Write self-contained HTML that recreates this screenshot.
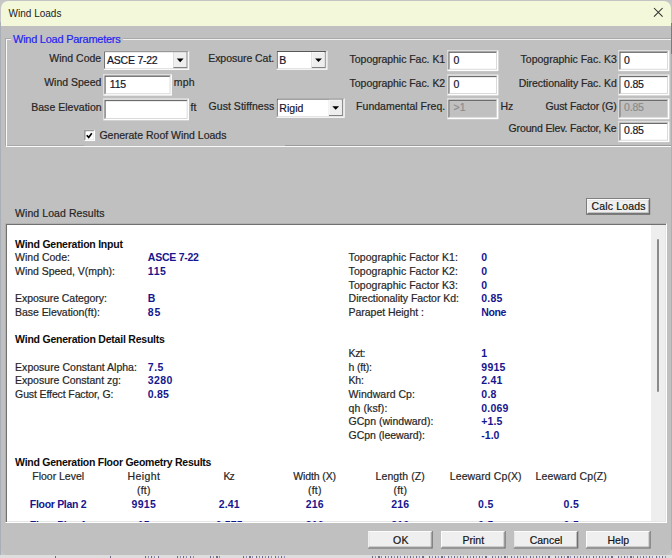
<!DOCTYPE html>
<html><head><meta charset="utf-8"><title>Wind Loads</title>
<style>
*{box-sizing:border-box;margin:0;padding:0}
html,body{width:672px;height:558px;overflow:hidden;background:#c6c6c6}
body{font-family:"Liberation Sans",sans-serif;font-size:10.5px;color:#222;position:relative;-webkit-text-stroke:0.2px}
div,span{position:absolute;white-space:nowrap}
#edgeL{left:0;top:22px;width:1px;height:536px;background:#a9afb6}
#bot{left:0;top:555px;width:672px;height:3px;background:#dedede}
#bot i{position:absolute;top:1.2px;height:1.8px;background:repeating-linear-gradient(90deg,#6a6a88 0 1.2px,#dcdce2 1.2px 3.1px,#8c8cac 3.1px 4px,#e4e4e4 4px 6.3px)}
#edgeT{left:0;top:0;width:672px;height:1px;background:#c4c4c4}
#dlg{left:1px;top:1px;width:670px;height:554.4px;background:#c0c0c0;border-radius:7px;overflow:hidden}
#title{left:0;top:0;width:670px;height:25.3px;background:#f2f8d9}
#ttext{left:8.6px;font-size:10px;letter-spacing:0;color:#1c1c1c;line-height:12px;-webkit-text-stroke:0}
.l{line-height:13px;height:13px;color:#262626}
.inp{background:#fff;border-top:1px solid #969696;border-left:1px solid #969696;border-right:1px solid #fff;border-bottom:1px solid #fff;box-shadow:inset 1px 1px 0 #767676, inset -1px -1px 0 #dcdcdc;overflow:hidden;color:#14142a}
.inp.dis{background:#c0c0c0;color:#8c8c8c}
.inp span{line-height:13px}
.ddb{right:1px;top:1px;bottom:1px;width:14px;background:#e8e8e8;border-top:1px solid #f6f6f6;border-left:1px solid #f6f6f6;border-right:1px solid #848484;border-bottom:1px solid #848484;box-shadow:inset -1px -1px 0 #b4b4b4}
.ddb:after{content:"";position:absolute;left:3px;top:4.5px;border-left:3.5px solid transparent;border-right:3.5px solid transparent;border-top:4px solid #000}
.btn{background:#e9e9e9;border-top:1px solid #fbfbfb;border-left:1px solid #fbfbfb;border-right:1px solid #6c6c6c;border-bottom:1px solid #6c6c6c;box-shadow:inset -1px -1px 0 #a4a4a4;text-align:center;color:#141414}
.btn span{left:0;right:0;text-align:center;line-height:13px}
#panel{left:5px;top:223px;width:662px;height:300px;background:#fff;border-top:1px solid #b2b2b2;border-left:1px solid #b2b2b2;border-right:1px solid #fff;border-bottom:1px solid #fff;box-shadow:inset 1px 1px 0 #707070, inset -1px -1px 0 #e6e6e6;overflow:hidden}
.t{line-height:13px;color:#262626}
.b{font-weight:bold;color:#0c0c0c;-webkit-text-stroke:0}
.v{font-weight:bold;color:#16168e;-webkit-text-stroke:0}
</style></head><body>
<div id="edgeT"></div><div id="edgeL"></div><div id="bot"><i style="left:55px;width:2px"></i><i style="left:110px;width:2px"></i><i style="left:145px;width:16px"></i><i style="left:177px;width:17px"></i><i style="left:210px;width:10px"></i><i style="left:243px;width:42px"></i><i style="left:372px;width:294px"></i></div>
<div id="dlg"><div id="title"></div></div>
<svg style="position:absolute;left:0;top:0" width="672" height="558" viewBox="0 0 672 558"><rect x="103.6" y="50.8" width="85.6" height="19.1" fill="#ffffff"/><path d="M103.6 50.8H189.2L188.6 51.4H104.2V69.3L103.6 69.9Z" fill="#a4a4a4"/><rect x="104.2" y="51.4" width="84.0" height="17.5" fill="#dcdcdc"/><path d="M104.19999999999999 51.4H188.2L187.3 52.3H105.1V68.0L104.19999999999999 68.9Z" fill="#585858"/><rect x="105.1" y="52.3" width="82.3" height="15.8" fill="#fff"/><rect x="173.4" y="52.3" width="14.0" height="15.8" fill="#828282"/><rect x="173.4" y="52.3" width="12.9" height="14.7" fill="#f8f8f8"/><rect x="174.3" y="53.2" width="12.0" height="13.8" fill="#eeeeee"/><path d="M176.8 58.6H183.6L180.2 62.2Z" fill="#000"/><rect x="276.3" y="50.5" width="51.2" height="19.3" fill="#ffffff"/><path d="M276.3 50.5H327.5L326.9 51.1H276.9V69.2L276.3 69.8Z" fill="#a4a4a4"/><rect x="276.9" y="51.1" width="49.6" height="17.7" fill="#dcdcdc"/><path d="M276.90000000000003 51.1H326.5L325.6 52.0H277.8V67.9L276.90000000000003 68.8Z" fill="#585858"/><rect x="277.8" y="52.0" width="47.9" height="16.0" fill="#fff"/><rect x="311.7" y="52.0" width="14.0" height="16.0" fill="#828282"/><rect x="311.7" y="52.0" width="12.9" height="14.9" fill="#f8f8f8"/><rect x="312.6" y="52.9" width="12.0" height="14.0" fill="#eeeeee"/><path d="M315.1 58.4H321.9L318.5 62.0Z" fill="#000"/><rect x="447" y="50.2" width="51.4" height="20.9" fill="#ffffff"/><path d="M447 50.2H498.4L497.0 51.6H448.4V69.7L447 71.1Z" fill="#dadada"/><rect x="448.4" y="51.6" width="48.6" height="18.1" fill="#d6d6d6"/><path d="M448.4 51.6H497.0L495.7 52.9H449.7V68.4L448.4 69.69999999999999Z" fill="#6c6c6c"/><rect x="449.7" y="52.9" width="46.4" height="15.9" fill="#fff"/><rect x="618" y="50.2" width="51.4" height="20.9" fill="#ffffff"/><path d="M618 50.2H669.4L668.0 51.6H619.4V69.7L618 71.1Z" fill="#dadada"/><rect x="619.4" y="51.6" width="48.6" height="18.1" fill="#d6d6d6"/><path d="M619.4 51.6H668.0L666.7 52.9H620.7V68.4L619.4 69.69999999999999Z" fill="#6c6c6c"/><rect x="620.7" y="52.9" width="46.4" height="15.9" fill="#fff"/><rect x="103.1" y="74.2" width="68.8" height="21.4" fill="#ffffff"/><path d="M103.1 74.2H171.9L170.5 75.6H104.5V94.2L103.1 95.6Z" fill="#dadada"/><rect x="104.5" y="75.6" width="66.0" height="18.6" fill="#d6d6d6"/><path d="M104.5 75.60000000000001H170.5L169.2 76.9H105.8V92.9L104.5 94.19999999999999Z" fill="#6c6c6c"/><rect x="105.8" y="76.9" width="63.8" height="16.4" fill="#fff"/><rect x="447" y="74.6" width="51.4" height="20.8" fill="#ffffff"/><path d="M447 74.6H498.4L497.0 76.0H448.4V94.0L447 95.4Z" fill="#dadada"/><rect x="448.4" y="76.0" width="48.6" height="18.0" fill="#d6d6d6"/><path d="M448.4 76.0H497.0L495.7 77.3H449.7V92.7L448.4 94.0Z" fill="#6c6c6c"/><rect x="449.7" y="77.3" width="46.4" height="15.8" fill="#fff"/><rect x="618" y="74.6" width="51.4" height="20.8" fill="#ffffff"/><path d="M618 74.6H669.4L668.0 76.0H619.4V94.0L618 95.4Z" fill="#dadada"/><rect x="619.4" y="76.0" width="48.6" height="18.0" fill="#d6d6d6"/><path d="M619.4 76.0H668.0L666.7 77.3H620.7V92.7L619.4 94.0Z" fill="#6c6c6c"/><rect x="620.7" y="77.3" width="46.4" height="15.8" fill="#fff"/><rect x="103.1" y="98.6" width="85.9" height="21.7" fill="#ffffff"/><path d="M103.1 98.6H189L187.6 100.0H104.5V118.9L103.1 120.3Z" fill="#dadada"/><rect x="104.5" y="100.0" width="83.1" height="18.9" fill="#d6d6d6"/><path d="M104.5 100.0H187.6L186.3 101.3H105.8V117.6L104.5 118.89999999999999Z" fill="#6c6c6c"/><rect x="105.8" y="101.3" width="80.9" height="16.7" fill="#fff"/><rect x="276.3" y="98.2" width="68.4" height="19.6" fill="#ffffff"/><path d="M276.3 98.2H344.7L344.1 98.8H276.9V117.2L276.3 117.8Z" fill="#a4a4a4"/><rect x="276.9" y="98.8" width="66.8" height="18.0" fill="#dcdcdc"/><path d="M276.90000000000003 98.8H343.7L342.8 99.7H277.8V115.9L276.90000000000003 116.8Z" fill="#585858"/><rect x="277.8" y="99.7" width="65.1" height="16.3" fill="#fff"/><rect x="328.9" y="99.7" width="14.0" height="16.3" fill="#828282"/><rect x="328.9" y="99.7" width="12.9" height="15.2" fill="#f8f8f8"/><rect x="329.8" y="100.6" width="12.0" height="14.3" fill="#eeeeee"/><path d="M332.3 106.25H339.1L335.7 109.85Z" fill="#000"/><rect x="447" y="98.4" width="51.4" height="20.8" fill="#ffffff"/><path d="M447 98.4H498.4L497.0 99.8H448.4V117.8L447 119.2Z" fill="#dadada"/><rect x="448.4" y="99.8" width="48.6" height="18.0" fill="#d6d6d6"/><path d="M448.4 99.80000000000001H497.0L495.7 101.1H449.7V116.5L448.4 117.8Z" fill="#6c6c6c"/><rect x="449.7" y="101.1" width="46.4" height="15.8" fill="#c0c0c0"/><rect x="618" y="98.4" width="51.4" height="20.8" fill="#ffffff"/><path d="M618 98.4H669.4L668.0 99.8H619.4V117.8L618 119.2Z" fill="#dadada"/><rect x="619.4" y="99.8" width="48.6" height="18.0" fill="#d6d6d6"/><path d="M619.4 99.80000000000001H668.0L666.7 101.1H620.7V116.5L619.4 117.8Z" fill="#6c6c6c"/><rect x="620.7" y="101.1" width="46.4" height="15.8" fill="#c0c0c0"/><rect x="83.9" y="129.7" width="11.15" height="11.35" fill="#ffffff"/><path d="M83.9 129.7H95.05L93.15 131.6H85.8V139.15L83.9 141.05Z" fill="#9a9a9a"/><rect x="85.8" y="131.6" width="8.3" height="8.5" fill="#e4e4e4"/><rect x="85.8" y="131.6" width="7.6" height="7.8" fill="#ffffff"/><path d="M86.7 135.2 L88.7 137.4 L91.8 133.3" stroke="#000" stroke-width="1.7" fill="none"/><rect x="618" y="121.3" width="51.4" height="20.8" fill="#ffffff"/><path d="M618 121.3H669.4L668.0 122.7H619.4V140.7L618 142.1Z" fill="#dadada"/><rect x="619.4" y="122.7" width="48.6" height="18.0" fill="#d6d6d6"/><path d="M619.4 122.7H668.0L666.7 124.0H620.7V139.4L619.4 140.7Z" fill="#6c6c6c"/><rect x="620.7" y="124.0" width="46.4" height="15.8" fill="#fff"/><rect x="586" y="198.2" width="64.2" height="16.5" fill="#707070"/><rect x="586.9" y="199.1" width="63.0" height="15.3" fill="#6a6a6a"/><path d="M586.9 199.1H649.4L648.6 200.1V213.1H587.9L586.9 213.9Z" fill="#fcfcfc"/><rect x="587.9" y="200.1" width="60.8" height="13.1" fill="#a8a8a8"/><rect x="587.9" y="200.1" width="60.0" height="12.3" fill="#efefef"/><rect x="368.1" y="531" width="64.6" height="17.5" fill="#6a6a6a"/><path d="M368.1 531H432.2L431.4 532V547.2H369.1L368.1 548.0Z" fill="#fcfcfc"/><rect x="369.1" y="532" width="62.4" height="15.3" fill="#a8a8a8"/><rect x="369.1" y="532" width="61.6" height="14.5" fill="#efefef"/><rect x="441" y="531" width="64.6" height="17.5" fill="#6a6a6a"/><path d="M441 531H505.1L504.3 532V547.2H442L441 548.0Z" fill="#fcfcfc"/><rect x="442" y="532" width="62.4" height="15.3" fill="#a8a8a8"/><rect x="442" y="532" width="61.6" height="14.5" fill="#efefef"/><rect x="513.7" y="531" width="64.6" height="17.5" fill="#6a6a6a"/><path d="M513.7 531H577.8L577.0 532V547.2H514.7L513.7 548.0Z" fill="#fcfcfc"/><rect x="514.7" y="532" width="62.4" height="15.3" fill="#a8a8a8"/><rect x="514.7" y="532" width="61.6" height="14.5" fill="#efefef"/><rect x="586" y="531" width="64.6" height="17.5" fill="#6a6a6a"/><path d="M586 531H650.1L649.3 532V547.2H587L586 548.0Z" fill="#fcfcfc"/><rect x="587" y="532" width="62.4" height="15.3" fill="#a8a8a8"/><rect x="587" y="532" width="61.6" height="14.5" fill="#efefef"/></svg>
<span id="ttext" style="top:7.73px">Wind Loads</span>
<svg style="position:absolute;left:653px;top:6.6px" width="11" height="11" viewBox="0 0 11 11"><path d="M1 1 L9.6 9.6 M9.6 1 L1 9.6" stroke="#2c2c2c" stroke-width="1.05" fill="none"/></svg>
<div style="left:5px;top:38px;width:667px;height:108px;border:1px solid #a9a9a9;border-right:none"></div>
<div style="left:6px;top:39px;width:666px;height:108px;border:1px solid #fafafa;border-top-color:#f0f0f0;border-right:none"></div>
<div style="left:84px;top:145px;width:201px;height:1px;background:#bcbcbc"></div>
<div style="left:285px;top:145px;width:387px;height:1px;background:#9c9c9c"></div>
<div style="left:11px;top:36px;width:112px;height:6px;background:#c0c0c0"></div>
<span class="l" style="left:13px;top:32.89px;color:#2424f2;font-size:11px;letter-spacing:-0.25px">Wind Load Parameters</span>
<span class="l" style="top:52.06px;letter-spacing:-0.007px;left:49.3px;">Wind Code</span>
<span class="l" style="top:53.89px;letter-spacing:-0.241px;left:107.1px;color:#14142a;">ASCE 7-22</span>
<span class="l" style="top:52.06px;letter-spacing:-0.046px;left:208.2px;">Exposure Cat.</span>
<span class="l" style="top:53.89px;left:279.3px;color:#14142a;">B</span>
<span class="l" style="top:53.06px;letter-spacing:-0.04px;left:349.6px;">Topographic Fac. K1</span>
<span class="l" style="top:53.89px;left:453.6px;color:#14142a;">0</span>
<span class="l" style="top:53.06px;letter-spacing:-0.006px;left:520.6px;">Topographic Fac. K3</span>
<span class="l" style="top:53.89px;left:624.1px;color:#14142a;">0</span>
<span class="l" style="top:76.06px;letter-spacing:-0.0px;left:44.2px;">Wind Speed</span>
<span class="l" style="top:77.89px;letter-spacing:-0.173px;left:109.8px;color:#14142a;">115</span>
<span class="l" style="top:76.06px;letter-spacing:0.231px;left:173.7px;">mph</span>
<span class="l" style="top:77.06px;letter-spacing:-0.04px;left:349.6px;">Topographic Fac. K2</span>
<span class="l" style="top:77.89px;left:453.6px;color:#14142a;">0</span>
<span class="l" style="top:77.06px;letter-spacing:-0.057px;left:518.8px;">Directionality Fac. Kd</span>
<span class="l" style="top:77.89px;letter-spacing:-0.207px;left:624.1px;color:#14142a;">0.85</span>
<span class="l" style="top:101.06px;letter-spacing:0.035px;left:31.2px;">Base Elevation</span>
<span class="l" style="top:101.06px;left:190.6px;">ft</span>
<span class="l" style="top:100.06px;letter-spacing:0.033px;left:208.6px;">Gust Stiffness</span>
<span class="l" style="top:101.89px;letter-spacing:0.055px;left:279.3px;color:#14142a;">Rigid</span>
<span class="l" style="top:100.06px;letter-spacing:0.024px;left:356.1px;">Fundamental Freq.</span>
<span class="l" style="top:100.89px;left:453.6px;color:#8c8c8c;">&gt;1</span>
<span class="l" style="top:100.06px;left:500.4px;">Hz</span>
<span class="l" style="top:100.06px;letter-spacing:-0.11px;left:545.4px;">Gust Factor (G)</span>
<span class="l" style="top:100.89px;letter-spacing:-0.207px;left:624.1px;color:#8c8c8c;">0.85</span>
<span class="l" style="top:129.06px;letter-spacing:-0.011px;left:99.4px;">Generate Roof Wind Loads</span>
<span class="l" style="top:122.06px;letter-spacing:-0.149px;left:508.6px;">Ground Elev. Factor, Ke</span>
<span class="l" style="top:123.89px;letter-spacing:-0.207px;left:624.1px;color:#14142a;">0.85</span>
<span class="l" style="top:207.06px;letter-spacing:0.079px;left:15.0px;">Wind Load Results</span>
<span class="l" style="top:200.06px;letter-spacing:0.185px;left:591.4px;color:#141414;">Calc Loads</span>
<div id="panel">
<span class="t b" style="top:14.06px;letter-spacing:-0.234px;left:9.1px;">Wind Generation Input</span>
<span class="t" style="top:27.06px;letter-spacing:-0.007px;left:9.1px;">Wind Code:</span>
<span class="t v" style="top:27.06px;letter-spacing:-0.251px;left:141.8px;">ASCE 7-22</span>
<span class="t" style="top:41.06px;letter-spacing:-0.033px;left:9.1px;">Wind Speed, V(mph):</span>
<span class="t v" style="top:41.06px;letter-spacing:0.573px;left:141.8px;">115</span>
<span class="t" style="top:68.06px;letter-spacing:-0.06px;left:9.1px;">Exposure Category:</span>
<span class="t v" style="top:68.06px;letter-spacing:0.006px;left:141.8px;">B</span>
<span class="t" style="top:82.06px;letter-spacing:-0.055px;left:9.1px;">Base Elevation(ft):</span>
<span class="t v" style="top:82.06px;letter-spacing:0.913px;left:141.8px;">85</span>
<span class="t" style="top:137.06px;letter-spacing:0.016px;left:9.1px;">Exposure Constant Alpha:</span>
<span class="t v" style="top:137.06px;letter-spacing:0.495px;left:141.8px;">7.5</span>
<span class="t" style="top:150.06px;letter-spacing:-0.022px;left:9.1px;">Exposure Constant zg:</span>
<span class="t v" style="top:150.06px;letter-spacing:0.414px;left:141.8px;">3280</span>
<span class="t" style="top:164.06px;letter-spacing:-0.117px;left:9.1px;">Gust Effect Factor, G:</span>
<span class="t v" style="top:164.06px;letter-spacing:0.221px;left:141.8px;">0.85</span>
<span class="t b" style="top:109.06px;letter-spacing:-0.223px;left:9.1px;">Wind Generation Detail Results</span>
<span class="t" style="top:27.06px;letter-spacing:0.035px;left:342.6px;">Topographic Factor K1:</span>
<span class="t v" style="top:27.06px;letter-spacing:0.756px;left:475.3px;">0</span>
<span class="t" style="top:41.06px;letter-spacing:0.035px;left:342.6px;">Topographic Factor K2:</span>
<span class="t v" style="top:41.06px;letter-spacing:0.756px;left:475.3px;">0</span>
<span class="t" style="top:55.06px;letter-spacing:0.035px;left:342.6px;">Topographic Factor K3:</span>
<span class="t v" style="top:55.06px;letter-spacing:0.756px;left:475.3px;">0</span>
<span class="t" style="top:68.06px;letter-spacing:-0.049px;left:342.6px;">Directionality Factor Kd:</span>
<span class="t v" style="top:68.06px;letter-spacing:0.221px;left:475.3px;">0.85</span>
<span class="t" style="top:82.06px;letter-spacing:-0.039px;left:342.6px;">Parapet Height :</span>
<span class="t v" style="top:82.06px;letter-spacing:-0.383px;left:475.3px;">None</span>
<span class="t" style="top:123.06px;letter-spacing:-0.431px;left:342.6px;">Kzt:</span>
<span class="t v" style="top:123.06px;letter-spacing:-0.244px;left:475.3px;">1</span>
<span class="t" style="top:137.06px;letter-spacing:-0.203px;left:342.6px;">h (ft):</span>
<span class="t v" style="top:137.06px;letter-spacing:0.247px;left:475.3px;">9915</span>
<span class="t" style="top:150.06px;letter-spacing:-0.233px;left:342.6px;">Kh:</span>
<span class="t v" style="top:150.06px;letter-spacing:0.221px;left:475.3px;">2.41</span>
<span class="t" style="top:164.06px;letter-spacing:0.032px;left:342.6px;">Windward Cp:</span>
<span class="t v" style="top:164.06px;letter-spacing:0.245px;left:475.3px;">0.8</span>
<span class="t" style="top:178.06px;letter-spacing:0.108px;left:342.6px;">qh (ksf):</span>
<span class="t v" style="top:178.06px;letter-spacing:0.205px;left:475.3px;">0.069</span>
<span class="t" style="top:191.06px;letter-spacing:0.012px;left:342.6px;">GCpn (windward):</span>
<span class="t v" style="top:191.06px;letter-spacing:0.122px;left:475.3px;">+1.5</span>
<span class="t" style="top:205.06px;letter-spacing:-0.052px;left:342.6px;">GCpn (leeward):</span>
<span class="t v" style="top:205.06px;letter-spacing:0.002px;left:475.3px;">-1.0</span>
<span class="t b" style="top:232.06px;letter-spacing:-0.258px;left:9.1px;">Wind Generation Floor Geometry Results</span>
<span class="t" style="top:246.06px;letter-spacing:-0.015px;left:26.3px;">Floor Level</span>
<span class="t" style="top:246.06px;letter-spacing:0.388px;left:121.55px;">Height</span>
<span class="t" style="top:246.06px;letter-spacing:-0.966px;left:217.55px;">Kz</span>
<span class="t" style="top:246.06px;letter-spacing:-0.121px;left:287.3px;">Width (X)</span>
<span class="t" style="top:246.06px;letter-spacing:0.094px;left:369.55px;">Length (Z)</span>
<span class="t" style="top:246.06px;letter-spacing:0.098px;left:443.8px;">Leeward Cp(X)</span>
<span class="t" style="top:246.06px;letter-spacing:0.106px;left:529.55px;">Leeward Cp(Z)</span>
<span class="t" style="top:260.06px;letter-spacing:0.191px;left:131.0px;">(ft)</span>
<span class="t" style="top:260.06px;letter-spacing:0.191px;left:302.0px;">(ft)</span>
<span class="t" style="top:260.06px;letter-spacing:0.191px;left:387.5px;">(ft)</span>
<span class="t v" style="top:274.06px;letter-spacing:-0.299px;left:23.8px;">Floor Plan 2</span>
<span class="t v" style="top:274.06px;letter-spacing:0.314px;left:125.55px;">9915</span>
<span class="t v" style="top:274.06px;letter-spacing:0.121px;left:212.8px;">2.41</span>
<span class="t v" style="top:274.06px;letter-spacing:0.134px;left:299.8px;">216</span>
<span class="t v" style="top:274.06px;letter-spacing:0.134px;left:385.3px;">216</span>
<span class="t v" style="top:274.06px;letter-spacing:0.345px;left:472.05px;">0.5</span>
<span class="t v" style="top:274.06px;letter-spacing:0.345px;left:557.55px;">0.5</span>
<div style="left:0;top:0;width:645px;height:297.5px;overflow:hidden"><span class="t v" style="top:295.06px;letter-spacing:-0.299px;left:23.8px;">Floor Plan 1</span>
<span class="t v" style="top:295.06px;letter-spacing:0.113px;left:131.8px;">15</span>
<span class="t v" style="top:295.06px;letter-spacing:0.13px;left:209.8px;">0.575</span>
<span class="t v" style="top:295.06px;letter-spacing:0.134px;left:299.8px;">216</span>
<span class="t v" style="top:295.06px;letter-spacing:0.134px;left:385.3px;">216</span>
<span class="t v" style="top:295.06px;letter-spacing:0.345px;left:472.05px;">0.5</span>
<span class="t v" style="top:295.06px;letter-spacing:0.345px;left:557.55px;">0.5</span>
</div>
<div style="left:645.4px;top:1px;width:14px;height:296px;background:#eeeeee"></div>
<div style="left:651.3px;top:15px;width:2.1px;height:152.7px;background:#8a8a8a;border-radius:1px"></div>
</div>
<span class="l" style="top:534.06px;letter-spacing:0.128px;left:393.1px;color:#141414;">OK</span>
<span class="l" style="top:534.06px;left:462.5px;color:#141414;">Print</span>
<span class="l" style="top:534.06px;left:529.66px;color:#141414;">Cancel</span>
<span class="l" style="top:534.06px;left:607.5px;color:#141414;">Help</span>
<div style="left:671px;top:23px;width:1px;height:31px;background:#7c7c7c"></div><div style="left:671px;top:54px;width:1px;height:496px;background:#b0b0b0"></div>
</body></html>
